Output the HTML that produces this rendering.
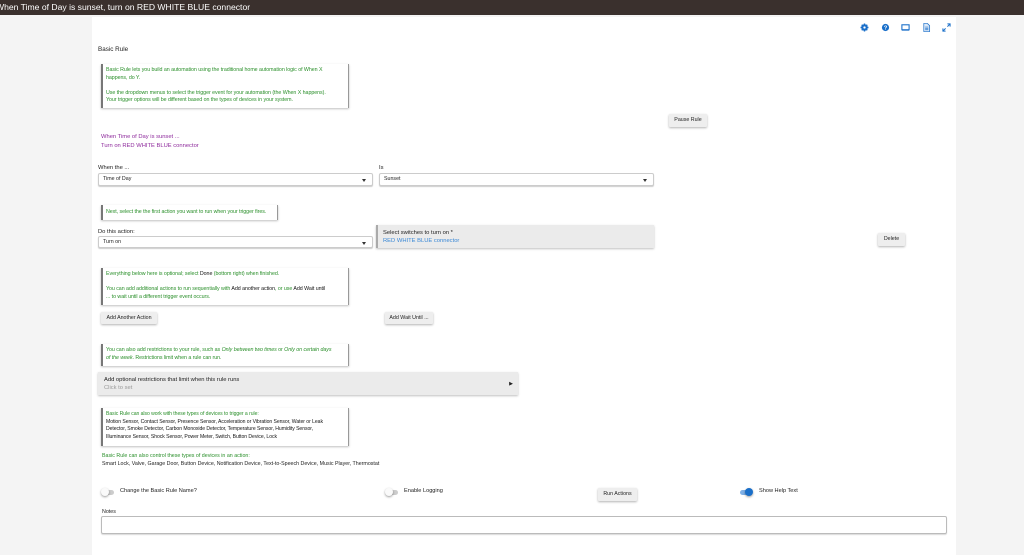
<!DOCTYPE html>
<html><head><meta charset="utf-8"><style>
*{box-sizing:border-box;margin:0;padding:0}
body{width:1024px;height:555px;overflow:hidden;background:#f4f4f4;font-family:"Liberation Sans",sans-serif;position:relative;color:#222}
.a{position:absolute;white-space:nowrap}
#bar{position:absolute;left:0;top:0;width:1024px;height:15px;background:#3a302d;color:#fff;font-size:8.6px;line-height:14px}
#bar span{position:relative;left:-4px}
#card{position:absolute;left:92px;top:17px;width:864px;height:538px;background:#fff}
.help{position:absolute;background:#fff;border-left:2px solid #777;border-right:1px solid #999;box-shadow:0 1px 2px rgba(0,0,0,.25);color:#2a8f2a;font-size:5.3px;letter-spacing:-0.05px;line-height:7.6px;padding:3px 4px 2px 3px;white-space:nowrap;overflow:hidden}
.help b{color:#111;font-weight:normal}
.sel{position:absolute;border:1px solid #ccc;border-radius:2px;box-shadow:0 1px 1px rgba(0,0,0,.2);font-size:5.3px;line-height:11px;padding-left:4px;background:#fff}
.sel:after{content:"";position:absolute;right:6px;top:4.5px;border-left:2.5px solid transparent;border-right:2.5px solid transparent;border-top:3px solid #333}
.btn{position:absolute;background:#eee;box-shadow:0 1px 2px rgba(0,0,0,.3);font-size:5.3px;text-align:center;color:#222;border-radius:1px}
.lbl{position:absolute;font-size:5.8px;color:#222;white-space:nowrap}
.tog{position:absolute;width:12px;height:5px;border-radius:3px;background:#ccc}
.tog i{position:absolute;top:-2px;width:8px;height:8px;border-radius:50%;background:#fafafa;box-shadow:0 1px 2px rgba(0,0,0,.4)}
.ic{position:absolute;top:23px;width:9px;height:9px}
</style></head><body>
<div id="bar"><span>When Time of Day is sunset, turn on RED WHITE BLUE connector</span></div>
<div id="card"></div>
<svg class="ic" style="left:860px" viewBox="0 0 10 10"><circle cx="5" cy="5" r="3.6" fill="#1a6fc9"/><path d="M5 0.6v8.8M0.6 5h8.8M1.9 1.9l6.2 6.2M8.1 1.9l-6.2 6.2" stroke="#1a6fc9" stroke-width="1.6"/><circle cx="5" cy="5" r="1.3" fill="#fff"/></svg>
<svg class="ic" style="left:881px" viewBox="0 0 10 10"><circle cx="5" cy="5" r="4" fill="#1a6fc9"/><text x="5" y="7.3" font-size="6.5" font-weight="bold" fill="#fff" text-anchor="middle" font-family="Liberation Sans">?</text></svg>
<svg class="ic" style="left:901px" viewBox="0 0 10 10"><rect x="1" y="2" width="8" height="5.5" fill="none" stroke="#1a6fc9" stroke-width="1.2"/><rect x="1" y="7.5" width="8" height="1" fill="#1a6fc9"/></svg>
<svg class="ic" style="left:922px" viewBox="0 0 10 10"><path d="M2 0.5h4l2.5 2.5v6.5h-6.5z" fill="#dbe8f7" stroke="#1a6fc9" stroke-width=".8"/><path d="M3.5 4.5h3.5M3.5 6h3.5M3.5 7.5h3.5" stroke="#1a6fc9" stroke-width=".7"/></svg>
<svg class="ic" style="left:942px" viewBox="0 0 10 10"><path d="M6 1h3v3M9 1L6 4M4 9H1V6M1 9l3-3" fill="none" stroke="#1a6fc9" stroke-width="1.1"/></svg>

<div class="a" style="left:98px;top:46px;font-size:6.3px;color:#222">Basic Rule</div>
<div class="help" style="left:101px;top:64px;width:248px;height:44px">Basic Rule lets you build an automation using the traditional home automation logic of When X<br>happens, do Y.<br><br>Use the dropdown menus to select the trigger event for your automation (the When X happens).<br>Your trigger options will be different based on the types of devices in your system.</div>
<div class="btn" style="left:669px;top:114px;width:38px;height:13px;line-height:13px">Pause Rule</div>
<div class="a" style="left:101px;top:133px;font-size:5.8px;color:#8e2a9c;line-height:8.5px">When Time of Day is sunset ...<br>Turn on RED WHITE BLUE connector</div>

<div class="lbl" style="left:98px;top:165px">When the ...</div>
<div class="sel" style="left:98px;top:173px;width:275px;height:13px">Time of Day</div>
<div class="lbl" style="left:379px;top:165px">Is</div>
<div class="sel" style="left:379px;top:173px;width:275px;height:13px">Sunset</div>

<div class="help" style="left:101px;top:205px;width:177px;height:15px;line-height:10px;padding-top:2px">Next, select the the first action you want to run when your trigger fires.</div>
<div class="lbl" style="left:98px;top:229px">Do this action:</div>
<div class="sel" style="left:98px;top:236px;width:275px;height:12px">Turn on</div>
<div class="a" style="left:376px;top:225px;width:278px;height:23px;background:#ebebeb;border-left:2px solid #aaa;box-shadow:0 1px 2px rgba(0,0,0,.25);font-size:5.8px;line-height:8px;padding:4px 5px">Select switches to turn on *<br><span style="color:#3a88d6">RED WHITE BLUE connector</span></div>
<div class="btn" style="left:878px;top:233px;width:27px;height:13px;line-height:13px">Delete</div>

<div class="help" style="left:101px;top:268px;width:248px;height:37px">Everything below here is optional; select <b>Done</b> (bottom right) when finished.<br><br>You can add additional actions to run sequentially with <b>Add another action</b>, or use <b>Add Wait until</b><br>... to wait until a different trigger event occurs.</div>
<div class="btn" style="left:101px;top:312px;width:56px;height:12px;line-height:12px">Add Another Action</div>
<div class="btn" style="left:385px;top:312px;width:48px;height:12px;line-height:12px">Add Wait Until ...</div>

<div class="help" style="left:101px;top:344px;width:248px;height:22px">You can also add restrictions to your rule, such as <i>Only between two times</i> or <i>Only on certain days</i><br><i>of the week</i>. Restrictions limit when a rule can run.</div>
<div class="a" style="left:98px;top:372px;width:420px;height:23px;background:#ebebeb;box-shadow:0 1px 2px rgba(0,0,0,.25);font-size:5.8px;line-height:8px;padding:4px 6px">Add optional restrictions that limit when this rule runs<br><span style="color:#999">Click to set</span><span style="position:absolute;right:5px;top:8px;font-size:5px">&#9654;</span></div>

<div class="help" style="left:101px;top:408px;width:248px;height:38px;font-size:5.1px;line-height:7.5px">Basic Rule can also work with these types of devices to trigger a rule:<br><b>Motion Sensor, Contact Sensor, Presence Sensor, Acceleration or Vibration Sensor, Water or Leak<br>Detector, Smoke Detector, Carbon Monoxide Detector, Temperature Sensor, Humidity Sensor,<br>Illuminance Sensor, Shock Sensor, Power Meter, Switch, Button Device, Lock</b></div>
<div class="a" style="left:102px;top:452px;font-size:5.3px;line-height:8px;color:#2a8f2a">Basic Rule can also control these types of devices in an action:<br><span style="color:#222">Smart Lock, Valve, Garage Door, Button Device, Notification Device, Text-to-Speech Device, Music Player, Thermostat</span></div>

<div class="tog" style="left:102px;top:490px"><i style="left:-1px"></i></div>
<div class="lbl" style="left:120px;top:488px;font-size:5.6px">Change the Basic Rule Name?</div>
<div class="tog" style="left:386px;top:490px"><i style="left:-1px"></i></div>
<div class="lbl" style="left:404px;top:488px;font-size:5.6px">Enable Logging</div>
<div class="btn" style="left:598px;top:488px;width:39px;height:13px;line-height:13px">Run Actions</div>
<div class="tog" style="left:740px;top:490px;background:#7fb0e6"><i style="left:5px;background:#1a6fc9"></i></div>
<div class="lbl" style="left:759px;top:488px;font-size:5.6px">Show Help Text</div>

<div class="lbl" style="left:102px;top:509px;font-size:5.3px">Notes</div>
<div class="a" style="left:101px;top:516px;width:846px;height:18px;border:1px solid #bbb;border-radius:2px;box-shadow:0 1px 1px rgba(0,0,0,.15)"></div>
</body></html>
